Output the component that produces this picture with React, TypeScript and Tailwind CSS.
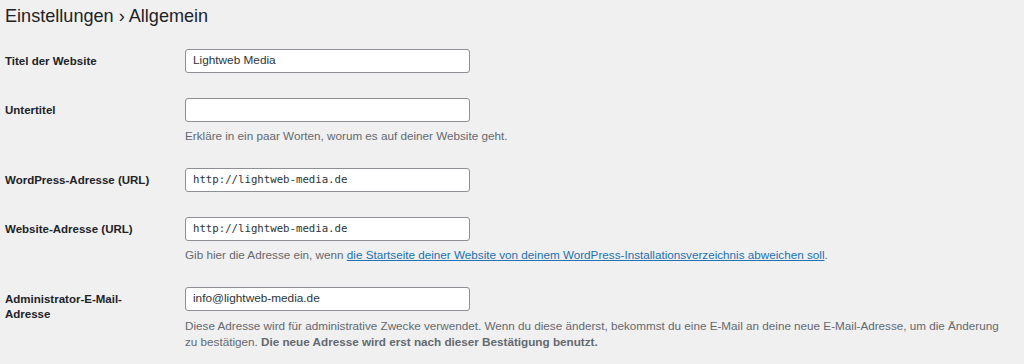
import React from "react";

const sans = { fontFamily: '"Liberation Sans", Arial, sans-serif' };

function Row({ label, children }: { label: React.ReactNode; children: React.ReactNode }) {
  return (
    <div className="flex pt-[12px] pb-[13px]">
      <div className="w-[185px] shrink-0 pl-[5px] pt-[5px] text-[11.5px] font-bold leading-[14.5px] text-[#1d2327]">{label}</div>
      <div className="flex-1">{children}</div>
    </div>
  );
}

function Input({ value, mono }: { value: string; mono?: boolean }) {
  return (
    <div
      className={`flex h-[24px] w-[285px] items-center rounded-[3px] border border-[#8c8f94] bg-white px-[7px] text-[#2c3338] ${mono ? "text-[10.7px]" : "text-[11.8px]"}`}
      style={mono ? { fontFamily: '"DejaVu Sans Mono", "Liberation Mono", monospace' } : undefined}
    >
      {value}
    </div>
  );
}

export default function App() {
  return (
    <div className="h-[364px] w-[1024px] overflow-hidden bg-[#f0f0f1]" style={sans}>
      <h1 className="pl-[5px] pt-[3px] text-[18.1px] leading-[26px] font-normal text-[#1d2327]">Einstellungen › Allgemein</h1>
      <div className="pt-[8px]">
        <Row label="Titel der Website">
          <Input value="Lightweb Media" />
        </Row>
        <Row label="Untertitel">
          <Input value="" />
          <p className="mt-[6px] text-[11.7px] leading-[15px] text-[#646970]">Erkläre in ein paar Worten, worum es auf deiner Website geht.</p>
        </Row>
        <Row label="WordPress-Adresse (URL)">
          <Input value="http://lightweb-media.de" mono />
        </Row>
        <Row label="Website-Adresse (URL)">
          <Input value="http://lightweb-media.de" mono />
          <p className="mt-[6px] text-[11.7px] leading-[15px] text-[#646970]">
            Gib hier die Adresse ein, wenn{" "}
            <a className="text-[#2271b1] underline">die Startseite deiner Website von deinem WordPress-Installationsverzeichnis abweichen soll</a>.
          </p>
        </Row>
        <Row label={<>Administrator-E-Mail-<br />Adresse</>}>
          <Input value="info@lightweb-media.de" />
          <p className="mt-[7px] pr-[14px] text-[11.7px] leading-[16px] text-[#646970]">
            Diese Adresse wird für administrative Zwecke verwendet. Wenn du diese änderst, bekommst du eine E-Mail an deine neue E-Mail-Adresse, um die Änderung zu bestätigen.{" "}
            <strong className="font-bold">Die neue Adresse wird erst nach dieser Bestätigung benutzt.</strong>
          </p>
        </Row>
      </div>
    </div>
  );
}
